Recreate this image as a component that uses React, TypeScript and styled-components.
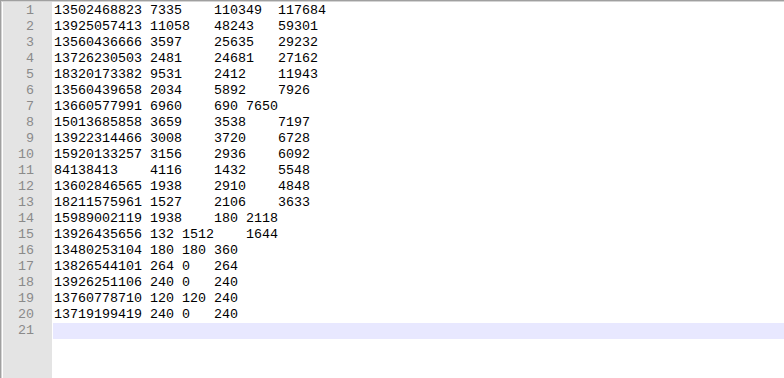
import React from "react";
import styled, { createGlobalStyle } from "styled-components";

const Global = createGlobalStyle`
  html, body { margin: 0; padding: 0; background: #ffffff; }
  #root { width: 784px; height: 378px; overflow: hidden; }
`;

const lines: string[] = [
  "13502468823 7335\t110349\t117684",
  "13925057413 11058\t48243\t59301",
  "13560436666 3597\t25635\t29232",
  "13726230503 2481\t24681\t27162",
  "18320173382 9531\t2412\t11943",
  "13560439658 2034\t5892\t7926",
  "13660577991 6960\t690 7650",
  "15013685858 3659\t3538\t7197",
  "13922314466 3008\t3720\t6728",
  "15920133257 3156\t2936\t6092",
  "84138413\t4116\t1432\t5548",
  "13602846565 1938\t2910\t4848",
  "18211575961 1527\t2106\t3633",
  "15989002119 1938\t180 2118",
  "13926435656 132 1512\t1644",
  "13480253104 180 180 360",
  "13826544101 264 0\t264",
  "13926251106 240 0\t240",
  "13760778710 120 120 240",
  "13719199419 240 0\t240",
  "",
];

const Frame = styled.div`
  display: flex;
  width: 784px;
  height: 378px;
  box-sizing: border-box;
  border-top: 1px solid #a0a0a0;
  border-left: 1px solid #a0a0a0;
  box-shadow: inset 1px 1px 0 #d4d4d4;
  padding: 1px 0 0 1px;
  font-family: "Liberation Mono", "Courier New", monospace;
  font-size: 13.33px;
  line-height: 16px;
`;

const Gutter = styled.div`
  flex: 0 0 49px;
  background: #e4e4e4;
  padding-top: 1px;
  box-sizing: border-box;
  margin-left: 1px;
`;

const LineNo = styled.div`
  height: 16px;
  text-align: right;
  padding-right: 18px;
  color: #8a8a8a;
`;

const Spacer = styled.div`
  flex: 0 0 1px;
  background: #ffffff;
`;

const Code = styled.div`
  flex: 1;
  padding-top: 1px;
  background: #ffffff;
`;

const Row = styled.div<{ $current?: boolean }>`
  height: 16px;
  white-space: pre;
  tab-size: 4;
  -moz-tab-size: 4;
  color: #000000;
  padding-left: 1px;
  background: ${(p) => (p.$current ? "#e8e8ff" : "transparent")};
`;

export default function App() {
  return (
    <>
      <Global />
      <Frame>
        <Gutter>
          {lines.map((_, i) => (
            <LineNo key={i}>{i + 1}</LineNo>
          ))}
        </Gutter>
        <Spacer />
        <Code>
          {lines.map((l, i) => (
            <Row key={i} $current={i === lines.length - 1}>
              {l}
            </Row>
          ))}
        </Code>
      </Frame>
    </>
  );
}
